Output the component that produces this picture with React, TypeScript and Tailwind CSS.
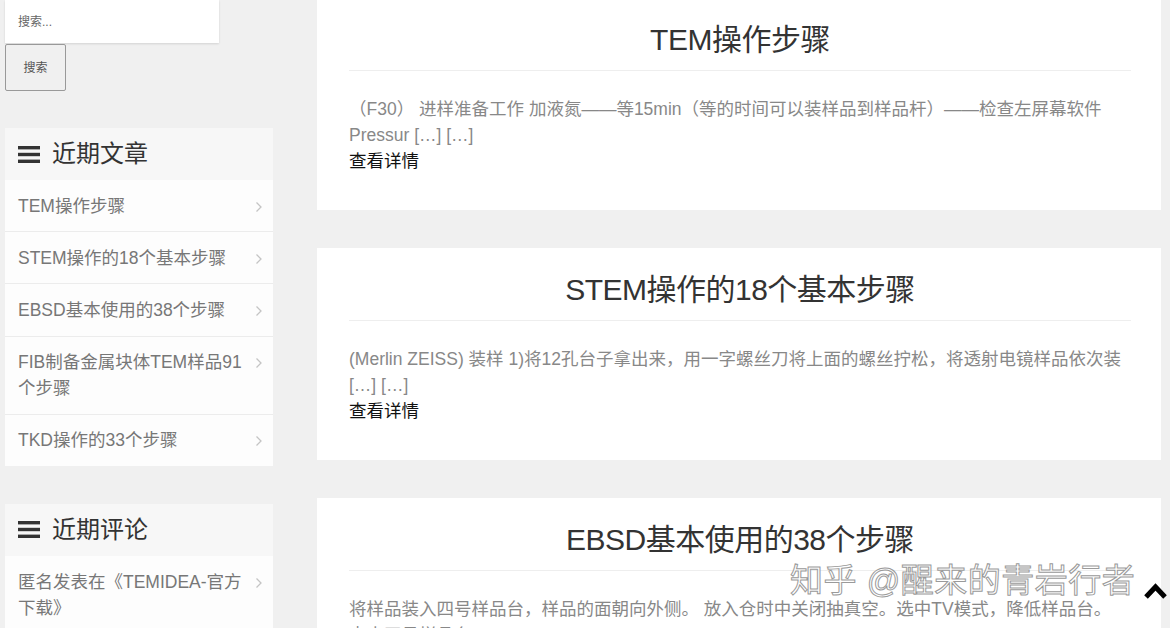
import React from 'react';

const font = { fontFamily: '"Liberation Sans", "Noto Sans CJK SC", sans-serif' };

interface Post {
  title: string;
  lines: string[];
}

const posts: Post[] = [
  {
    title: 'TEM操作步骤',
    lines: ['（F30） 进样准备工作 加液氮——等15min（等的时间可以装样品到样品杆）——检查左屏幕软件', 'Pressur […] […]'],
  },
  {
    title: 'STEM操作的18个基本步骤',
    lines: ['(Merlin ZEISS) 装样 1)将12孔台子拿出来，用一字螺丝刀将上面的螺丝拧松，将透射电镜样品依次装', '[…] […]'],
  },
  {
    title: 'EBSD基本使用的38个步骤',
    lines: ['将样品装入四号样品台，样品的面朝向外侧。 放入仓时中关闭抽真空。选中TV模式，降低样品台。', '点击四号样品台 […] […]'],
  },
];

const recentPosts = [
  'TEM操作步骤',
  'STEM操作的18个基本步骤',
  'EBSD基本使用的38个步骤',
  'FIB制备金属块体TEM样品91个步骤',
  'TKD操作的33个步骤',
];

const recentComments = ['匿名发表在《TEMIDEA-官方下载》'];

const Bars: React.FC = () => (
  <svg width="22" height="17" viewBox="0 0 22 17" className="shrink-0">
    <rect x="0" y="0" width="22" height="3.4" fill="#333" />
    <rect x="0" y="6.8" width="22" height="3.4" fill="#333" />
    <rect x="0" y="13.6" width="22" height="3.4" fill="#333" />
  </svg>
);

const Chevron: React.FC = () => (
  <svg width="8" height="12" viewBox="0 0 8 12" className="shrink-0 mt-[8px]">
    <polyline points="1.5,1.5 6,6 1.5,10.5" fill="none" stroke="#c4c4c4" strokeWidth="1.3" />
  </svg>
);

const Widget: React.FC<{ title: string; items: string[] }> = ({ title, items }) => (
  <div className="w-[268px]">
    <div className="h-[52px] bg-[#f7f7f7] flex items-center gap-[12px] pl-[13px]">
      <Bars />
      <span className="text-[24px] text-[#333]">{title}</span>
    </div>
    {items.map((item, i) => (
      <div
        key={item}
        className={`bg-[#fdfdfd] flex justify-between gap-[12px] pl-[13px] pr-[10px] py-[12.6px] ${
          i > 0 ? 'border-t border-[#ececec]' : ''
        }`}
      >
        <span className="text-[17.5px] leading-[26px] text-[#777]">{item}</span>
        <Chevron />
      </div>
    ))}
  </div>
);

const PostCard: React.FC<{ post: Post }> = ({ post }) => (
  <div className="bg-white pl-[32px] pr-[30px] pt-[22px] pb-[36px]">
    <h2 className="text-[30px] leading-[40px] text-[#333] text-center tracking-[-0.5px]">{post.title}</h2>
    <div className="mt-[10px] border-t border-[#eee]" />
    <div className="mt-[25px] text-[17.5px] leading-[26px] text-[#888]">
      {post.lines.map((l) => (
        <p key={l} className="whitespace-nowrap">
          {l}
        </p>
      ))}
    </div>
    <a className="block text-[17.5px] leading-[26px] text-[#111]">查看详情</a>
  </div>
);

const App: React.FC = () => {
  return (
    <div className="relative w-[1170px] h-[628px] overflow-hidden bg-[#f0f0f0]" style={font}>
      <div className="flex">
        <aside className="ml-[5px] w-[268px] shrink-0">
          <div className="w-[214px] h-[43px] bg-white shadow-[0_1px_2px_rgba(0,0,0,0.12)] flex items-center pl-[13px]">
            <span className="text-[12px] text-[#666]">搜索...</span>
          </div>
          <button className="mt-[1px] w-[61px] h-[47px] rounded-[2px] border border-[#999] bg-[#f0f0f0] text-[12px] text-[#555]">
            搜索
          </button>
          <div className="mt-[37px]">
            <Widget title="近期文章" items={recentPosts} />
          </div>
          <div className="mt-[38px]">
            <Widget title="近期评论" items={recentComments} />
          </div>
        </aside>
        <main className="ml-[44px] w-[844px] mt-[-2px] flex flex-col gap-[38px]">
          {posts.map((p) => (
            <PostCard key={p.title} post={p} />
          ))}
        </main>
      </div>

      <div className="absolute left-[790px] top-[561px] flex items-center">
        <span className="text-[33px] leading-[40px] text-white/80 tracking-[0.5px] [-webkit-text-stroke:1px_#9a9a9a]">
          知乎 @醒来的青岩行者
        </span>
      </div>
      <svg className="absolute left-[1143px] top-[582px]" width="25" height="18" viewBox="0 0 25 18">
        <polyline points="3,15 12.5,5 22,15" fill="none" stroke="#000" strokeWidth="5" />
      </svg>
    </div>
  );
};

export default App;
